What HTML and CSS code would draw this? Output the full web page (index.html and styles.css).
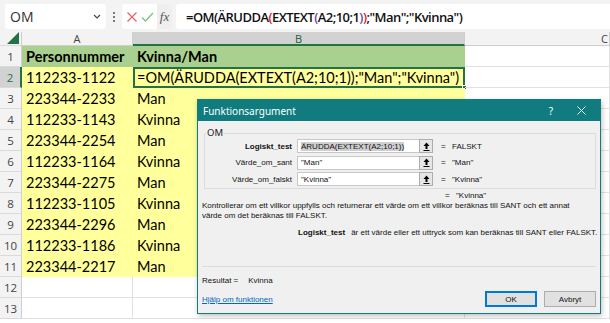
FILE: index.html
```
<!DOCTYPE html>
<html lang="sv">
<head>
<meta charset="utf-8">
<title>OM-funktion</title>
<link rel="stylesheet" href="styles.css">
</head>
<body>
<div class="app">
  <div class="topbar">
    <div class="namebox"><span>OM</span>
      <svg class="chev" width="8" height="5" viewBox="0 0 8 5"><path d="M1 1 L4 4 L7 1" fill="none" stroke="#444" stroke-width="1.1"/></svg>
    </div>
    <div class="grip"><i></i><i></i><i></i></div>
    <div class="fxbox">
      <svg class="ico" width="12" height="12" viewBox="0 0 12 12"><path d="M1.5 1.5 L10.5 10.5 M10.5 1.5 L1.5 10.5" stroke="#e8636a" stroke-width="1.3" fill="none"/></svg>
      <svg class="ico" width="13" height="12" viewBox="0 0 13 12"><path d="M1 6.5 L4.5 10 L12 2" stroke="#7ec27e" stroke-width="1.3" fill="none"/></svg>
      <span class="fx">fx</span>
    </div>
    <div class="formula"><span class="k">=OM(ÄRUDDA</span><span class="r">(</span><span class="k">EXTEXT</span><span class="p">(</span><span class="k">A2;10;1</span><span class="p">)</span><span class="r">)</span><span class="k">;"Man";"Kvinna")</span></div>
  </div>

  <div class="sheet">
    <div class="row hdr">
      <div class="rh corner"><svg width="12" height="12" viewBox="0 0 12 12"><path d="M12 0 L12 12 L0 12 Z" fill="#217346"/></svg></div>
      <div class="ch ca">A</div>
      <div class="ch cb sel">B</div>
      <div class="ch cc">C</div>
    </div>
    <div class="row">
      <div class="rh">1</div>
      <div class="cell ca green b">Personnummer</div>
      <div class="cell cb green b">Kvinna/Man</div>
      <div class="cell cc"></div>
    </div>
    <div class="row">
      <div class="rh selrow">2</div>
      <div class="cell ca yellow">112233-1122</div>
      <div class="cell cb yellow active">=OM(ÄRUDDA(EXTEXT(A2;10;1));"Man";"Kvinna")<span class="handle"></span></div>
      <div class="cell cc"></div>
    </div>
    <div class="row"><div class="rh">3</div><div class="cell ca yellow">223344-2233</div><div class="cell cb yellow">Man</div><div class="cell cc"></div></div>
    <div class="row"><div class="rh">4</div><div class="cell ca yellow">112233-1143</div><div class="cell cb yellow">Kvinna</div><div class="cell cc"></div></div>
    <div class="row"><div class="rh">5</div><div class="cell ca yellow">223344-2254</div><div class="cell cb yellow">Man</div><div class="cell cc"></div></div>
    <div class="row"><div class="rh">6</div><div class="cell ca yellow">112233-1164</div><div class="cell cb yellow">Kvinna</div><div class="cell cc"></div></div>
    <div class="row"><div class="rh">7</div><div class="cell ca yellow">223344-2275</div><div class="cell cb yellow">Man</div><div class="cell cc"></div></div>
    <div class="row"><div class="rh">8</div><div class="cell ca yellow">112233-1105</div><div class="cell cb yellow">Kvinna</div><div class="cell cc"></div></div>
    <div class="row"><div class="rh">9</div><div class="cell ca yellow">223344-2296</div><div class="cell cb yellow">Man</div><div class="cell cc"></div></div>
    <div class="row"><div class="rh">10</div><div class="cell ca yellow">112233-1186</div><div class="cell cb yellow">Kvinna</div><div class="cell cc"></div></div>
    <div class="row"><div class="rh">11</div><div class="cell ca yellow">223344-2217</div><div class="cell cb yellow">Man</div><div class="cell cc"></div></div>
    <div class="row"><div class="rh">12</div><div class="cell ca"></div><div class="cell cb"></div><div class="cell cc"></div></div>
    <div class="row"><div class="rh">13</div><div class="cell ca"></div><div class="cell cb"></div><div class="cell cc"></div></div>
  </div>

  <div class="dialog">
    <div class="titlebar">
      <span class="title">Funktionsargument</span>
      <span class="tb-btns"><span class="q">?</span>
        <svg width="9" height="9" viewBox="0 0 9 9"><path d="M0.5 0.5 L8.5 8.5 M8.5 0.5 L0.5 8.5" stroke="#fff" stroke-width="1"/></svg>
      </span>
    </div>
    <div class="dbody">
      <fieldset class="group">
        <legend>OM</legend>
        <div class="arg">
          <span class="lbl b">Logiskt_test</span>
          <span class="inp"><span class="hl">ÄRUDDA(EXTEXT(A2;10;1))</span></span>
          <span class="abtn"><svg width="7" height="9" viewBox="0 0 7 9"><path d="M3.5 0.5 L6.5 4 L4.5 4 L4.5 7 L2.5 7 L2.5 4 L0.5 4 Z" fill="#000"/><rect x="0.5" y="8" width="6" height="1" fill="#000"/></svg></span>
          <span class="eq">=</span><span class="val">FALSKT</span>
        </div>
        <div class="arg">
          <span class="lbl">Värde_om_sant</span>
          <span class="inp">"Man"</span>
          <span class="abtn"><svg width="7" height="9" viewBox="0 0 7 9"><path d="M3.5 0.5 L6.5 4 L4.5 4 L4.5 7 L2.5 7 L2.5 4 L0.5 4 Z" fill="#000"/><rect x="0.5" y="8" width="6" height="1" fill="#000"/></svg></span>
          <span class="eq">=</span><span class="val">"Man"</span>
        </div>
        <div class="arg">
          <span class="lbl">Värde_om_falskt</span>
          <span class="inp">"Kvinna"</span>
          <span class="abtn"><svg width="7" height="9" viewBox="0 0 7 9"><path d="M3.5 0.5 L6.5 4 L4.5 4 L4.5 7 L2.5 7 L2.5 4 L0.5 4 Z" fill="#000"/><rect x="0.5" y="8" width="6" height="1" fill="#000"/></svg></span>
          <span class="eq">=</span><span class="val">"Kvinna"</span>
        </div>
      </fieldset>
      <div class="total"><span class="eq">=</span><span class="val">"Kvinna"</span></div>
      <p class="desc">Kontrollerar om ett villkor uppfylls och returnerar ett värde om ett villkor beräknas till SANT och ett annat värde om det beräknas till FALSKT.</p>
      <p class="argdesc"><span class="b">Logiskt_test</span><span class="adtext">är ett värde eller ett uttryck som kan beräknas till SANT eller FALSKT.</span></p>
      <div class="sep"></div>
      <div class="result"><span>Resultat =</span><span class="rv">Kvinna</span></div>
      <div class="footer">
        <a class="help" href="#">Hjälp om funktionen</a>
        <div class="btns"><span class="btn ok">OK</span><span class="btn">Avbryt</span></div>
      </div>
    </div>
  </div>
</div>
</body>
</html>
```
FILE: styles.css
```
* { box-sizing: border-box; }
html, body { margin: 0; padding: 0; }
body { width: 610px; height: 323px; overflow: hidden; background: #fff; font-family: "Noto Sans", "Liberation Sans", sans-serif; }
.app { position: relative; width: 610px; height: 323px; overflow: hidden; }

.topbar { height: 32px; background: #f3f3f3; display: flex; align-items: flex-start; padding-top: 4px; padding-left: 5px; }
.namebox { width: 101px; height: 25px; background: #fff; border-radius: 3px; display: flex; align-items: center; justify-content: space-between; padding: 0 5px 0 5px; font-family: "Open Sans", sans-serif; font-size: 14px; color: #333; }
.grip { width: 16px; height: 25px; display: flex; flex-direction: column; align-items: center; justify-content: center; gap: 2px; }
.grip i { width: 2px; height: 2px; background: #777; display: block; }
.fxbox { width: 50px; height: 25px; background: #fff; border-radius: 3px; display: flex; align-items: center; padding-left: 4px; gap: 3px; margin-right: 4px; }
.fxbox .ico { flex: none; }
.fx { margin-left: auto; width: 17px; height: 25px; background: #efefef; border-radius: 0 3px 3px 0; font-family: "Liberation Serif", serif; font-style: italic; font-size: 13px; color: #555; display: flex; align-items: center; justify-content: center; }
.formula { flex: 1; height: 25px; background: #fff; border-radius: 3px 0 0 3px; display: flex; align-items: center; padding-left: 10px; font-family: "Open Sans", sans-serif; font-weight: 600; font-size: 13px; letter-spacing: -0.55px; color: #111; white-space: nowrap; }
.formula .r { color: #e0202a; }
.formula .p { color: #7a3fa6; }

.sheet { font-family: Lato, sans-serif; }
.row { display: flex; height: 21px; }
.row.hdr { height: 14px; }
.rh { width: 22px; flex: none; background: #f3f3f3; border-bottom: 1px solid #dadada; border-right: 1px solid #cfcfcf; font-family: "Open Sans", sans-serif; font-size: 11.5px; color: #444; display: flex; align-items: center; justify-content: center; }
.rh.corner { justify-content: flex-end; align-items: flex-end; padding: 0 2px 1px 0; }
.rh.selrow { background: #d2d2d2; color: #217346; border-right: 2px solid #217346; }
.ch { background: #f3f3f3; border-right: 1px solid #cfcfcf; border-bottom: 1px solid #cfcfcf; font-family: "Open Sans", sans-serif; font-size: 11px; color: #444; display: flex; align-items: center; justify-content: center; }
.ch.sel { background: #d2d2d2; color: #1c5e3a; border-bottom: 2px solid #217346; }
.ca { width: 111px; flex: none; }
.cb { width: 332px; flex: none; }
.cc { flex: 1; }
.ch.cc { justify-content: flex-end; padding-right: 1px; }
.cell { font-size: 14.5px; color: #000; padding-left: 4px; display: flex; align-items: center; white-space: nowrap; border-right: 1px solid #e1e1e1; border-bottom: 1px solid #e1e1e1; position: relative; }
.cell.b { font-weight: 700; }
.green { background: #a9d08e; border-color: #a9d08e; }
.yellow { background: #ffff9b; border-color: #ffff9b; }
.cell.active { border: 2px solid #217346; padding-left: 2px; }
.handle { position: absolute; right: -4px; bottom: -4px; width: 5px; height: 5px; background: #217346; border: 1px solid #fff; }

.dialog { position: absolute; left: 197px; top: 99px; width: 404px; height: 215px; background: #f0f0f0; border: 1px solid #107c7f; box-shadow: 1px 2px 5px rgba(0,0,0,0.25); font-family: "Liberation Sans", sans-serif; font-size: 8px; color: #111; }
.titlebar { height: 21px; background: #107c7f; color: #fff; display: flex; align-items: center; justify-content: space-between; padding: 0 14px 0 5px; }
.title { font-family: "Noto Sans", sans-serif; font-size: 10px; }
.tb-btns { display: flex; align-items: center; gap: 24px; }
.q { font-family: "Noto Sans", sans-serif; font-size: 10px; }
.dbody { padding: 0 4px 0 4px; }
.group { margin: 8px 0 0 2px; width: 392px; height: 60px; border: 1px solid #dcdcdc; padding: 1px 0 0 0; }
.group legend { font-family: "Noto Sans", sans-serif; font-size: 9.5px; padding: 0 1px; margin-left: 1px; color: #222; line-height: 8px; }
.arg { display: flex; align-items: center; height: 16.5px; }
.lbl { width: 92px; text-align: right; padding-right: 5px; }
.b { font-weight: 700; }
.inp { width: 122px; height: 14px; background: #fff; border: 1px solid #c8c8c8; border-right: none; display: flex; align-items: center; padding-left: 3px; white-space: nowrap; overflow: hidden; }
.hl { background: #cfcfcf; }
.abtn { width: 14px; height: 14px; background: #e6e6e6; border: 1px solid #adadad; display: flex; align-items: center; justify-content: center; }
.eq { margin-left: 8px; width: 11px; }
.total { display: flex; margin: 1px 0 0 235px; height: 10px; align-items: center; }
.desc { margin: 1px 0 0 0; line-height: 9.5px; width: 380px; }
.argdesc { margin: 8px 0 0 96px; display: flex; gap: 6px; white-space: nowrap; }
.sep { height: 1px; background: #dcdcdc; margin: 29px 0 0 0; }
.result { display: flex; margin-top: 9px; }
.rv { margin-left: 10px; }
.footer { display: flex; justify-content: space-between; align-items: center; margin-top: 6px; }
.help { color: #0066cc; text-decoration: underline; }
.btns { display: flex; gap: 7px; }
.btn { width: 52px; height: 16px; background: #e1e1e1; border: 1px solid #adadad; display: flex; align-items: center; justify-content: center; }
.btn.ok { border: 1px solid #0078d7; box-shadow: inset 0 0 0 1px #0078d7; }
```
